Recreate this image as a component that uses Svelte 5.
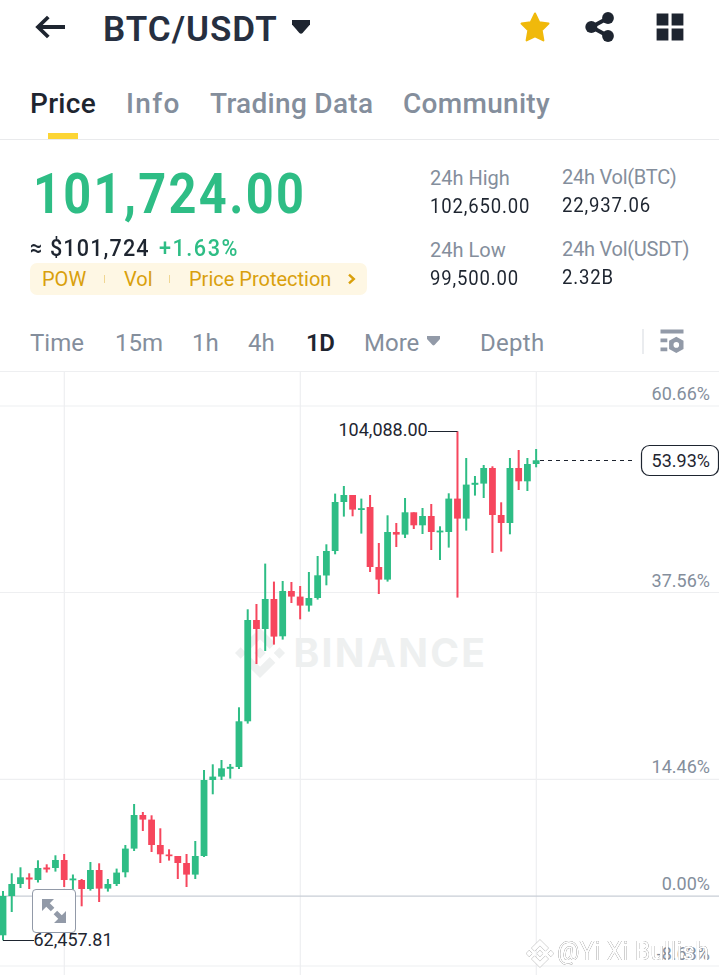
<script>
  const tabs = ['Price', 'Info', 'Trading Data', 'Community'];
  const frames = ['Time', '15m', '1h', '4h', '1D'];
  const stats = [
    [['24h High', '102,650.00'], ['24h Low', '99,500.00']],
    [['24h Vol(BTC)', '22,937.06'], ['24h Vol(USDT)', '2.32B']]
  ];

  // direction, body top, body bottom, wick top, wick bottom
  const candles = [
    [1, 896, 935.3, 891, 940.3], [1, 884, 896, 873.3, 912], [1, 877.3, 884, 867.3, 888],
    [0, 877.5, 879.5, 873.3, 889], [1, 868, 880, 860.3, 882.5], [0, 867.5, 869.5, 864.3, 872.5],
    [1, 860, 868, 855.3, 871.6], [0, 860, 880, 854, 887], [1, 878.5, 880.3, 874.5, 890],
    [0, 880, 889, 879, 906.3], [1, 870, 889, 862, 890.6], [0, 870, 888.6, 863.3, 902],
    [1, 884, 888.6, 879, 891.6], [1, 872.6, 884, 868.6, 886], [1, 848.6, 872.3, 845, 877.3],
    [1, 815, 848.6, 804, 851], [0, 815, 819.6, 812, 831], [0, 819.6, 845, 815.3, 852],
    [0, 845, 854.3, 828.3, 863], [0, 854.5, 856.2, 849.3, 860.6], [0, 856, 863, 856, 879],
    [0, 863, 874.6, 854, 887], [1, 856, 874.6, 841, 879], [1, 780, 856, 770, 857],
    [1, 776.6, 780, 764.3, 794.3], [1, 768.3, 776.6, 760, 780], [1, 766.8, 768.8, 764, 778.6],
    [1, 721.3, 767, 707.3, 769], [1, 620, 721.3, 609.3, 723.6], [0, 620, 629, 604, 664],
    [1, 599, 629, 563.6, 651], [0, 599, 636.6, 581.6, 644.6], [1, 591, 636.3, 581, 639.6],
    [0, 591, 596.6, 582, 603], [0, 596.6, 605.6, 586, 619.3], [1, 598, 605.6, 572, 611.6],
    [1, 575.3, 598, 556, 599.6], [1, 551, 575.5, 544.3, 585.3], [1, 502, 551, 493.6, 554.3],
    [1, 495, 502, 486, 516.6], [0, 495, 509.6, 495, 516.3], [1, 508.2, 510, 498.6, 533.6],
    [0, 507, 567, 495, 572], [0, 567, 579.6, 543, 594], [1, 532, 579.6, 515.3, 581.6],
    [0, 532, 534.6, 523, 547], [1, 512.3, 534.6, 498, 538], [0, 512.3, 525.3, 512.3, 529],
    [1, 516, 525.3, 508, 534], [0, 516, 532, 504, 550], [1, 530.6, 532.4, 526.3, 560],
    [1, 498.6, 532, 493.3, 547.6], [0, 498.6, 518.6, 431.3, 597.6], [1, 484.6, 518.6, 458, 530.6],
    [1, 482.8, 484.8, 476, 495.6], [1, 468, 483.6, 465, 498], [0, 468, 515, 466.3, 553],
    [0, 515, 523, 502.3, 551.6], [1, 468, 523, 458, 534.3], [0, 468, 481.3, 450, 490],
    [1, 464, 481.3, 458, 491], [1, 460.3, 464, 449, 467.3]
  ];
  const cx = (i) => 3 + i * 8.74;
  const logo =
    'M38.7 53.2 63.3 28.6l24.6 24.6 14.3-14.3L63.3 0 24.4 38.9zM0 63.3 14.3 49l14.3 14.3-14.3 14.3zM38.7 73.4 63.3 98l24.6-24.6 14.3 14.3-38.9 38.9-38.9-38.9zM98 63.3 112.3 49l14.3 14.3-14.3 14.3zM77.8 63.3 63.3 48.8 48.8 63.3l14.5 14.5z';
</script>

<div class="screen">
  <header>
    <svg class="back" width="32" height="26" viewBox="0 0 32 26"><path d="M14.3 3 4 13l10.3 10M4.5 13H31" fill="none" stroke="#1e2530" stroke-width="3.8" /></svg>
    <h1>BTC/USDT</h1>
    <svg class="caret" width="18" height="14" viewBox="0 0 18 14"><path d="M0 0h18v4.5L10.6 13q-1.6 1.6-3.2 0L0 4.5z" fill="#1e2530" /></svg>
    <div class="actions">
      <svg width="32" height="32" viewBox="0 0 32 32"><path d="m16 2.5 4.2 8.8 9.3 1.3-6.8 6.7 1.7 10.1-8.4-4-8.4 4 1.7-10.1-6.8-6.7 9.3-1.3z" fill="#f0b90b" stroke="#f0b90b" stroke-width="2" stroke-linejoin="round" /></svg>
      <svg width="30" height="32" viewBox="0 0 30 32"><g fill="#1e2530"><path d="M23 7 6.5 16 23 25" fill="none" stroke="#1e2530" stroke-width="4" /><circle cx="6.3" cy="16" r="6" /><circle cx="23" cy="7" r="5.9" /><circle cx="23" cy="25" r="5.9" /></g></svg>
      <svg width="28" height="28" viewBox="0 0 28 28"><path d="M.6.6h11.8v11.8H.6zM15.6.6h11.8v11.8H15.6zM.6 15.6h11.8v11.8H.6zM15.6 15.6h11.8v11.8H15.6z" fill="#1e2530" /></svg>
    </div>
  </header>

  <nav class="tabs">
    {#each tabs as tab, i}
      <span class:active={i === 0} class:spaced={tab === 'Info'}>{tab}</span>
    {/each}
  </nav>

  <section class="summary">
    <div class="quote">
      <div class="last">101,724.00</div>
      <div class="change"><span class="usd">≈ $101,724</span><span class="pct">+1.63%</span></div>
      <div class="tags">
        <span class="pow">POW</span><i></i><span class="vol">Vol</span><i></i><span class="protect">Price Protection</span>
        <svg width="10" height="14" viewBox="0 0 10 14"><path d="m2 2.6 4.8 4.4L2 11.4" fill="none" stroke="#d9a00c" stroke-width="2.4" /></svg>
      </div>
    </div>
    {#each stats as column, c}
      <dl class:second={c === 1}>
        {#each column as [label, value]}
          <div><dt>{label}</dt><dd>{value}</dd></div>
        {/each}
      </dl>
    {/each}
  </section>

  <nav class="frames">
    {#each frames as frame}
      <span class:active={frame === '1D'}>{frame}</span>
    {/each}
    <span class="more">More <svg width="13" height="10" viewBox="0 0 13 10"><path d="M0 0h13v3L7.5 9q-1 .9-2 0L0 3z" fill="#929aa8" /></svg></span>
    <span class="depth">Depth</span>
    <div class="settings">
      <svg width="24" height="25" viewBox="0 0 24 25"><g fill="#929aa8"><path d="M.5.5h23v4H.5zM.5 9.5h6.8v3.8H.5zM.5 18.5h6.8v3.8H.5z" /><path fill-rule="evenodd" d="m16.3 7.7 7.2 4v8.2l-7.2 4-7.2-4v-8.2zm0 5.4a2.8 2.8 0 1 0 0 5.6 2.8 2.8 0 0 0 0-5.6z" /></g></svg>
    </div>
  </nav>

  <div class="chart">
    <svg width="719" height="603" viewBox="0 372 719 603">
      <g class="grid">
        <path d="M0 406H719M0 592.5H719M0 779.3H719M0 966H719M64.3 372V975M300.3 372V975M536.3 372V975" />
        <path class="zero" d="M0 896.2H719" />
      </g>
      <g class="watermark">
        <path d={logo} transform="translate(235 628) scale(.395)" />
        <text x="293.5" y="667" textLength="191.5">BINANCE</text>
      </g>
      {#each candles as [up, top, bottom, high, low], i}
        <g fill={up ? '#2ebd85' : '#f6465d'}>
          <rect x={cx(i) - 1} y={high} width="2" height={low - high} />
          <rect x={cx(i) - 3.4} y={top} width="6.8" height={bottom - top} />
        </g>
      {/each}
      <path class="pointer" d="M428 431.5H457.5M3 940.5H34" />
      <path class="pointer" d="M540 460.5H632" stroke-dasharray="4 4" />
      <g class="marks">
        <text x="338.5" y="436">104,088.00</text>
        <text x="33.5" y="946">62,457.81</text>
      </g>
      <g class="axis">
        <text x="710" y="400">60.66%</text>
        <text x="710" y="586.8">37.56%</text>
        <text x="710" y="773">14.46%</text>
        <text x="710" y="890">0.00%</text>
        <text x="710" y="960">-8.63%</text>
      </g>
      <rect x="641.5" y="445.5" width="77" height="30" rx="8" fill="#fff" stroke="#1e2530" stroke-width="1.2" />
      <text class="now" x="710" y="467">53.93%</text>
      <g class="credit">
        <path d={logo} transform="translate(526 939.5) scale(.221)" />
        <text x="557" y="960">@Yi Xi Bullish</text>
      </g>
    </svg>
    <div class="expand">
      <svg width="26" height="26" viewBox="0 0 26 26"><path d="M1 1h12L1 13zM25 25H13l12-12z" fill="#929aa8" /><path d="m5 5 6.6 6.6M21 21l-6.6-6.6" stroke="#929aa8" stroke-width="5" /></svg>
    </div>
  </div>
</div>

<style>
  :global(body) { margin: 0; background: #fff; }
  .screen { width: 719px; height: 975px; overflow: hidden; background: #fff; color: #1e2530; font-family: Roboto, 'Liberation Sans', sans-serif; white-space: nowrap; }
  svg { display: block; flex: none; }
  header { display: flex; align-items: center; height: 54px; padding: 0 35px 0 34px; }
  h1 { margin: 5px 0 0 37px; font-size: 35px; line-height: 50px; font-weight: 600; letter-spacing: 1px; width: 175px; color: #262f40; }
  .caret { margin-left: 14px; }
  .actions { display: flex; align-items: center; margin-left: auto; }
  .actions svg { margin-left: 34px; }
  .actions svg:last-child { margin-left: 41px; }

  .tabs { display: grid; grid-template-columns: 96px 84px 193px 160px; height: 85px; padding-left: 30px; border-bottom: 1px solid #e9eaec; font-size: 28px; font-weight: 480; line-height: 100px; letter-spacing: .3px; color: #848e9c; }
  .tabs span { height: 85px; }
  .tabs .spaced { letter-spacing: 1.4px; }
  .tabs .active { color: #1e2530; }
  .tabs .active::after { content: ''; display: block; width: 30px; height: 6px; margin: -21px 0 0 18px; background: #fcd535; }

  .summary { display: flex; height: 173px; padding-left: 30px; }
  .quote { width: 400px; padding-top: 20px; }
  .last { height: 70px; margin-left: 3px; font-size: 56px; line-height: 68px; font-weight: 700; letter-spacing: 2.7px; color: #2ebd85; transform-origin: 0 0; transform: scaleX(.87); }
  .change { display: flex; height: 33px; font-size: 24px; line-height: 36px; font-weight: 500; }
  .usd, .pct { transform-origin: 0 0; transform: scaleX(.9); letter-spacing: 1.25px; }
  .usd { width: 129px; }
  .pct { color: #2ebd85; letter-spacing: 1.7px; }
  .tags { display: flex; align-items: center; width: 325px; height: 32px; padding-left: 12px; border-radius: 7px; background: #fef7e4; color: #d9a00c; font-size: 20px; }
  .pow { width: 62px; }
  .vol { width: 45px; }
  .protect { width: 158px; }
  .tags i { width: 1px; height: 8px; margin-right: 19px; background: #f0d692; }
  dl { width: 132px; margin: 0; padding-top: 24px; }
  dl.second { padding-top: 23px; }
  dl div { height: 72px; }
  dt { height: 29px; font-size: 20px; line-height: 28px; color: #848e9c; }
  .second dt { letter-spacing: -.25px; }
  dd { margin: 0; font-size: 19.5px; line-height: 28px; letter-spacing: .9px; transform-origin: 0 0; transform: scaleX(.95); }

  .frames { display: grid; grid-template-columns: 85px 77px 56px 58px 58px 116px 162px 60px; height: 59px; padding-left: 30px; font-size: 24px; line-height: 60px; color: #848e9c; }
  .frames .active { font-weight: 650; color: #1e2530; letter-spacing: -.5px; }
  .frames .depth { letter-spacing: .3px; }
  .more { display: flex; align-items: center; gap: 8px; }
  .more svg { margin-top: -4px; }
  .settings { align-self: center; height: 25px; margin-top: -3px; padding-left: 16px; border-left: 2px solid #eaecef; }

  .chart { position: relative; height: 603px; border-top: 1px solid #eeeff1; margin-top: -1px; }
  .chart text { font-size: 18px; }
  .grid path { fill: none; stroke: #eeeff1; stroke-width: 1.2; }
  .grid .zero { stroke: #c8ced6; stroke-width: 1.3; }
  .watermark { fill: #eef0f0; }
  .chart .watermark text { font: 700 39px Inter, sans-serif; }
  .pointer { fill: none; stroke: #1e2530; stroke-width: 1.1; }
  .marks, .now { fill: #1e2530; }
  .axis { fill: #848e9c; }
  .axis text, .now { text-anchor: end; }
  .credit { fill: #fff; filter: drop-shadow(.9px .9px .5px #333); }
  .chart .credit text { font-size: 25px; }
  .expand { position: absolute; left: 32px; top: 517px; box-sizing: border-box; display: flex; align-items: center; justify-content: center; width: 44px; height: 44px; border: 1px solid #929aa8; border-radius: 4px; background: rgba(255, 255, 255, .96); }
</style>
